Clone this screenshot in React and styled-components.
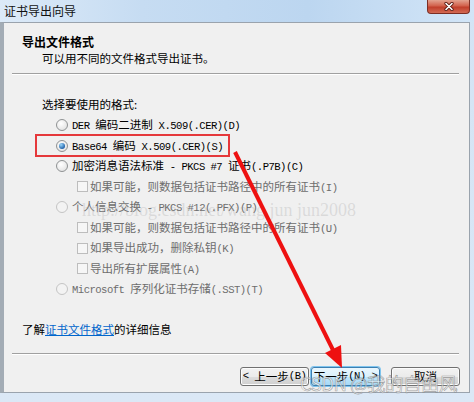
import styled, { createGlobalStyle } from "styled-components";

const GlobalStyle = createGlobalStyle`
  html, body {
    margin: 0;
    padding: 0;
  }
  body {
    width: 474px;
    height: 402px;
    overflow: hidden;
    background: #d9e7f5;
    font-family: "Noto Sans CJK SC", "Liberation Sans", sans-serif;
    font-size: 11.5px;
    color: #000;
  }
`;

// the wizard's list of export formats
const options = [
  { type: "radio", label: "DER 编码二进制 X.509(.CER)(D)" },
  { type: "radio", label: "Base64 编码 X.509(.CER)(S)", checked: true, highlight: true },
  { type: "radio", label: "加密消息语法标准 - PKCS #7 证书(.P7B)(C)" },
  { type: "check", label: "如果可能，则数据包括证书路径中的所有证书(I)", disabled: true },
  { type: "radio", label: "个人信息交换 - PKCS #12(.PFX)(P)", disabled: true },
  { type: "check", label: "如果可能，则数据包括证书路径中的所有证书(U)", disabled: true },
  { type: "check", label: "如果导出成功，删除私钥(K)", disabled: true },
  { type: "check", label: "导出所有扩展属性(A)", disabled: true },
  { type: "radio", label: "Microsoft 序列化证书存储(.SST)(T)", disabled: true },
];

// ascii runs get a half width mono font, like SimSun does
const Mixed = ({ text }) =>
  text
    .split(/([\x00-\x7F]+)/)
    .filter(Boolean)
    .map((part, i) =>
      /^[\x00-\x7F]+$/.test(part) ? <Latin key={i}>{part}</Latin> : part
    );

const App = () => {
  return (
    <>
      <GlobalStyle />
      <Window>
        <TitleBar>
          <Title>证书导出向导</Title>
          <CloseButton>
            <svg width="10" height="9" viewBox="0 0 10 9">
              <path d="M2 1.5 L8 7.5 M8 1.5 L2 7.5" stroke="#5a1a12" strokeWidth="3.2" strokeLinecap="round" />
              <path d="M2 1.5 L8 7.5 M8 1.5 L2 7.5" stroke="#fff" strokeWidth="1.6" strokeLinecap="round" />
            </svg>
          </CloseButton>
        </TitleBar>

        <Frame>
          <Panel>
            <Header>
              <HeaderTitle>导出文件格式</HeaderTitle>
              <HeaderSub>可以用不同的文件格式导出证书。</HeaderSub>
            </Header>
            <Separator $top={7} />

            <Body>
              <Heading>选择要使用的格式:</Heading>
              <OptionList>
                {options.map((opt) => (
                  <OptionRow key={opt.label} $indent={opt.type === "check" ? 35 : 14} $disabled={opt.disabled}>
                    {opt.highlight && <Highlight />}
                    {opt.type === "radio" ? (
                      <Radio $checked={opt.checked} $disabled={opt.disabled} />
                    ) : (
                      <Check $disabled={opt.disabled} />
                    )}
                    <span>
                      <Mixed text={opt.label} />
                    </span>
                  </OptionRow>
                ))}
              </OptionList>
              <MoreInfo>
                了解<Link>证书文件格式</Link>的详细信息
              </MoreInfo>
            </Body>

            <Separator $top={16} />
            <ButtonRow>
              <Button>
                <Mixed text="< 上一步(B)" />
              </Button>
              <Button $primary>
                <Mixed text="下一步(N) >" />
              </Button>
              <Button $gap>取消</Button>
            </ButtonRow>
          </Panel>
        </Frame>

        <BlogMark>http://blog.csdn.net/wang jun jun2008</BlogMark>
        <CsdnMark>CSDN @我的自由风</CsdnMark>
        <Arrow viewBox="0 0 474 402">
          <line x1="235" y1="152" x2="333" y2="350" stroke="#ee1111" strokeWidth="4" />
          <polygon points="342,368 341,345 325,353" fill="#ee1111" />
        </Arrow>
      </Window>
    </>
  );
};

export default App;

const Window = styled.div`
  position: relative;
  width: 474px;
  height: 402px;
  display: flex;
  flex-direction: column;
  background: linear-gradient(180deg, #d3e4f5, #dbe8f6);
`;

const TitleBar = styled.div`
  height: 22px;
  flex: none;
  display: flex;
  align-items: flex-start;
  background: linear-gradient(90deg, #dceaf8 0%, #c6dcf2 30%, #bcd6f0 65%, #d2e5f7 100%);
`;

const Title = styled.span`
  padding: 3px 0 0 4px;
  font-size: 12px;
  line-height: 15px;
  color: #111;
`;

const CloseButton = styled.div`
  margin-left: auto;
  margin-right: 4px;
  width: 43px;
  height: 14px;
  box-sizing: border-box;
  border: 1px solid #7c2e24;
  border-top: none;
  border-radius: 0 0 4px 4px;
  background: linear-gradient(180deg, #e3a390 0%, #d2614c 45%, #c13f2b 55%, #d26a54 100%);
  display: flex;
  align-items: center;
  justify-content: center;
`;

const Frame = styled.div`
  flex: 1;
  min-height: 0;
  display: flex;
  padding: 0 4px 9px 0;
`;

const Panel = styled.div`
  flex: 1;
  display: flex;
  flex-direction: column;
  background: #f0f0f0;
  border: 1px solid #9aa3ad;
  border-left: 4px solid #a3acb5;
`;

const Header = styled.div`
  padding: 11px 0 0 18px;
  line-height: 16px;
`;

const HeaderTitle = styled.div`
  font-size: 12px;
  font-weight: 700;
`;

const HeaderSub = styled.div`
  padding-left: 20px;
`;

const Separator = styled.div`
  margin: ${(p) => p.$top}px 10px 0 8px;
  height: 1px;
  background: #a0a0a0;
  border-bottom: 1px solid #ffffff;
  flex: none;
`;

const Body = styled.div`
  padding-left: 18px;
  line-height: 16px;
`;

const Heading = styled.div`
  margin-top: 21px;
  padding-left: 20px;
`;

const OptionList = styled.div`
  margin: 3px 0 0 20px;
  display: flex;
  flex-direction: column;
`;

const OptionRow = styled.div`
  position: relative;
  height: 20.5px;
  display: flex;
  align-items: center;
  gap: ${(p) => (p.$indent > 20 ? 2 : 4)}px;
  padding-left: ${(p) => p.$indent}px;
  color: ${(p) => (p.$disabled ? "#6d6d6d" : "#000")};
  white-space: nowrap;
`;

const Highlight = styled.div`
  position: absolute;
  left: -7px;
  top: -2px;
  width: 195px;
  height: 23px;
  box-sizing: border-box;
  border: 2px solid #e5383b;
`;

const Latin = styled.span`
  font-family: "Liberation Mono", monospace;
  font-size: 0.92em;
  letter-spacing: -0.05em;
  white-space: pre;
`;

const Radio = styled.span`
  width: 12px;
  height: 12px;
  flex: none;
  box-sizing: border-box;
  border-radius: 50%;
  border: 1px solid ${(p) => (p.$disabled ? "#c4c4c4" : "#8f9293")};
  background: ${(p) =>
    p.$disabled ? "#f3f3f3" : "radial-gradient(circle at 40% 35%, #ffffff, #dcdcdc)"};
  display: flex;
  align-items: center;
  justify-content: center;

  &::after {
    content: "";
    display: ${(p) => (p.$checked ? "block" : "none")};
    width: 6px;
    height: 6px;
    border-radius: 50%;
    background: radial-gradient(circle at 35% 30%, #9ad6fa, #1c5da6 75%);
  }
`;

const Check = styled.span`
  width: 11px;
  height: 11px;
  flex: none;
  box-sizing: border-box;
  border: 1px solid #bdbdbd;
  background: #f6f6f6;
`;

const MoreInfo = styled.div`
  margin-top: 21.5px;
`;

const Link = styled.span`
  color: #0066cc;
  text-decoration: underline;
`;

const ButtonRow = styled.div`
  margin-top: 12px;
  padding-right: 9px;
  display: flex;
  justify-content: flex-end;
  gap: 2px;
`;

const Button = styled.div`
  width: 69px;
  height: 19px;
  box-sizing: border-box;
  margin-left: ${(p) => (p.$gap ? 9 : 0)}px;
  border: 1px solid ${(p) => (p.$primary ? "#3c7fb1" : "#707070")};
  border-radius: 3px;
  background: ${(p) =>
    p.$primary
      ? "linear-gradient(180deg, #eaf6fd 0%, #d9f0fc 50%, #bee6fd 51%, #a7d9f5 100%)"
      : "linear-gradient(180deg, #f2f2f2 0%, #ebebeb 50%, #dddddd 51%, #cfcfcf 100%)"};
  box-shadow: ${(p) => (p.$primary ? "0 0 0 1px #7ec4ee" : "inset 0 0 0 1px #fcfcfc")};
  display: flex;
  align-items: center;
  justify-content: center;
  line-height: 15px;
  white-space: nowrap;
`;

const BlogMark = styled.div`
  position: absolute;
  left: 82px;
  top: 200px;
  font-family: "Liberation Serif", serif;
  font-size: 18px;
  line-height: 20px;
  color: rgba(150, 150, 150, 0.25);
  white-space: nowrap;
  pointer-events: none;
`;

const CsdnMark = styled.div`
  position: absolute;
  left: 300px;
  top: 372px;
  font-family: "Noto Sans CJK SC", "Liberation Sans", sans-serif;
  font-size: 18.5px;
  line-height: 22px;
  letter-spacing: -0.5px;
  color: rgba(255, 255, 255, 0.6);
  -webkit-text-stroke: 0.6px rgba(120, 120, 120, 0.7);
  white-space: nowrap;
  pointer-events: none;
`;

const Arrow = styled.svg`
  position: absolute;
  left: 0;
  top: 0;
  width: 474px;
  height: 402px;
  pointer-events: none;
`;
